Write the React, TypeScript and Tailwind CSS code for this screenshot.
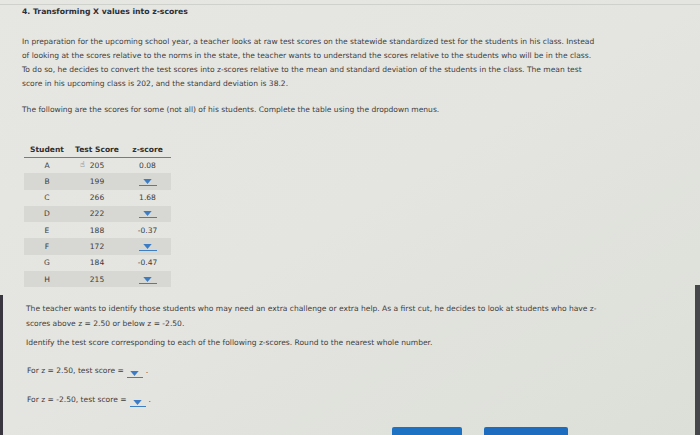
import React from 'react';

const rows: { s: string; t: string; z: string | null }[] = [
  { s: 'A', t: '205', z: '0.08' },
  { s: 'B', t: '199', z: null },
  { s: 'C', t: '266', z: '1.68' },
  { s: 'D', t: '222', z: null },
  { s: 'E', t: '188', z: '-0.37' },
  { s: 'F', t: '172', z: null },
  { s: 'G', t: '184', z: '-0.47' },
  { s: 'H', t: '215', z: null },
];

const Drop: React.FC<{ w?: string }> = ({ w = 'w-[18px]' }) => (
  <span className={`inline-flex ${w} justify-center border-b-[1.5px] border-[#3d7fc4] pb-[1px]`}>
    <svg width="9" height="5" viewBox="0 0 10 6">
      <path d="M0 0 L10 0 L5 6 Z" fill="#3b7cc4" />
    </svg>
  </span>
);

export default function App() {
  return (
    <div
      className="w-[700px] h-[435px] overflow-hidden relative bg-gradient-to-br from-[#e6e6e2] via-[#e4e4e0] to-[#dcdfd8] text-[#3c3c3c] text-[7.55px]"
      style={{ fontFamily: '"DejaVu Sans", Verdana, sans-serif' }}
    >
      <div className="h-[5px] border-b border-[#cfd1cc]" />
      <div className="pl-[22px] whitespace-nowrap">
        <h1 className="mt-[1px] text-[7.7px] font-bold text-[#2a2f3a] leading-[12px]">4. Transforming X values into z-scores</h1>

        <p className="mt-[17px] leading-[14px]">
          In preparation for the upcoming school year, a teacher looks at raw test scores on the statewide standardized test for the students in his class. Instead
          <br />
          of looking at the scores relative to the norms in the state, the teacher wants to understand the scores relative to the students who will be in the class.
          <br />
          To do so, he decides to convert the test scores into z-scores relative to the mean and standard deviation of the students in the class. The mean test
          <br />
          score in his upcoming class is 202, and the standard deviation is 38.2.
        </p>

        <p className="mt-[12px] leading-[14px]">
          The following are the scores for some (not all) of his students. Complete the table using the dropdown menus.
        </p>

        <table className="mt-[26px] ml-[2px] w-[147px] border-collapse text-center">
          <thead>
            <tr className="border-b border-[#7a7a7a] font-bold text-[#2f2f2f]">
              <th className="h-[14px] w-[46px] font-bold">Student</th>
              <th className="w-[54px] font-bold">Test Score</th>
              <th className="font-bold">z-score</th>
            </tr>
          </thead>
          <tbody>
            {rows.map((r, i) => (
              <tr key={r.s} className={`h-[16.3px] ${i % 2 === 1 ? 'bg-[#d7d8d4]' : ''}`}>
                <td>{r.s}</td>
                <td className="relative">
                  {i === 0 && <span className="absolute left-[10px] top-[3px] text-[8px] leading-none">☝</span>}
                  {r.t}
                </td>
                <td>{r.z ?? <Drop />}</td>
              </tr>
            ))}
          </tbody>
        </table>

        <p className="mt-[14px] ml-[4px] leading-[15px]">
          The teacher wants to identify those students who may need an extra challenge or extra help. As a first cut, he decides to look at students who have z-
          <br />
          scores above z = 2.50 or below z = -2.50.
        </p>

        <p className="mt-[5px] ml-[4px] leading-[14px]">
          Identify the test score corresponding to each of the following z-scores. Round to the nearest whole number.
        </p>

        <p className="mt-[14px] ml-[5px] leading-[14px] flex items-end gap-[3px]">
          <span>For z = 2.50, test score =</span>
          <Drop w="w-[16px]" />
          <span>.</span>
        </p>

        <p className="mt-[15px] ml-[5px] leading-[14px] flex items-end gap-[3px]">
          <span>For z = -2.50, test score =</span>
          <Drop w="w-[16px]" />
          <span>.</span>
        </p>
      </div>

      <div className="absolute left-[392px] top-[427px] w-[70px] h-[12px] rounded-[2px] bg-[#1d72c4]" />
      <div className="absolute left-[484px] top-[427px] w-[84px] h-[12px] rounded-[2px] bg-[#1d6cc0]" />
      <div className="absolute right-0 top-[285px] w-[5px] h-[160px] bg-[#45474a]" />
      <div className="absolute left-0 top-[295px] w-[3px] h-[150px] bg-[#3a3640]" />
    </div>
  );
}
